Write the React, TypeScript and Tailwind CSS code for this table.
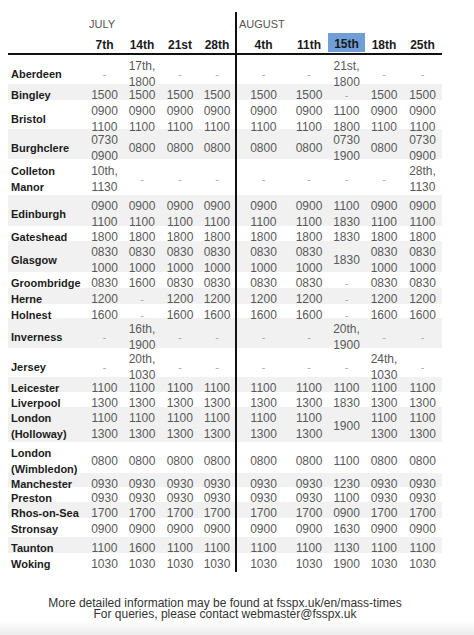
import React from "react";

type Row = { name: string[]; h: string; cells: string[][] };

const d = ["-"];
const one = (s: string) => [s];
const two = (a: string, b: string) => [a, b];

const rows: Row[] = [
  { name: ["Aberdeen"], h: "h-[29px]", cells: [d, two("17th,", "1800"), d, d, d, d, two("21st,", "1800"), d, d] },
  { name: ["Bingley"], h: "h-[16px]", cells: [one("1500"), one("1500"), one("1500"), one("1500"), one("1500"), one("1500"), d, one("1500"), one("1500")] },
  { name: ["Bristol"], h: "h-[29px]", cells: [two("0900", "1100"), two("0900", "1100"), two("0900", "1100"), two("0900", "1100"), two("0900", "1100"), two("0900", "1100"), two("1100", "1800"), two("0900", "1100"), two("0900", "1100")] },
  { name: ["Burghclere"], h: "h-[30px]", cells: [two("0730", "0900"), one("0800"), one("0800"), one("0800"), one("0800"), one("0800"), two("0730", "1900"), one("0800"), two("0730", "0900")] },
  { name: ["Colleton", "Manor"], h: "h-[36px]", cells: [two("10th,", "1130"), d, d, d, d, d, d, d, two("28th,", "1130")] },
  { name: ["Edinburgh"], h: "h-[31px]", cells: [two("0900", "1100"), two("0900", "1100"), two("0900", "1100"), two("0900", "1100"), two("0900", "1100"), two("0900", "1100"), two("1100", "1830"), two("0900", "1100"), two("0900", "1100")] },
  { name: ["Gateshead"], h: "h-[15px]", cells: [one("1800"), one("1800"), one("1800"), one("1800"), one("1800"), one("1800"), one("1830"), one("1800"), one("1800")] },
  { name: ["Glasgow"], h: "h-[31px]", cells: [two("0830", "1000"), two("0830", "1000"), two("0830", "1000"), two("0830", "1000"), two("0830", "1000"), two("0830", "1000"), one("1830"), two("0830", "1000"), two("0830", "1000")] },
  { name: ["Groombridge"], h: "h-[16px]", cells: [one("0830"), one("1600"), one("0830"), one("0830"), one("0830"), one("0830"), d, one("0830"), one("0830")] },
  { name: ["Herne"], h: "h-[16px]", cells: [one("1200"), d, one("1200"), one("1200"), one("1200"), one("1200"), d, one("1200"), one("1200")] },
  { name: ["Holnest"], h: "h-[14px]", cells: [one("1600"), d, one("1600"), one("1600"), one("1600"), one("1600"), d, one("1600"), one("1600")] },
  { name: ["Inverness"], h: "h-[30px]", cells: [d, two("16th,", "1900"), d, d, d, d, two("20th,", "1900"), d, d] },
  { name: ["Jersey"], h: "h-[29px]", cells: [d, two("20th,", "1030"), d, d, d, d, d, two("24th,", "1030"), d] },
  { name: ["Leicester"], h: "h-[15px]", cells: [one("1100"), one("1100"), one("1100"), one("1100"), one("1100"), one("1100"), one("1100"), one("1100"), one("1100")] },
  { name: ["Liverpool"], h: "h-[15px]", cells: [one("1300"), one("1300"), one("1300"), one("1300"), one("1300"), one("1300"), one("1830"), one("1300"), one("1300")] },
  { name: ["London", "(Holloway)"], h: "h-[35px]", cells: [two("1100", "1300"), two("1100", "1300"), two("1100", "1300"), two("1100", "1300"), two("1100", "1300"), two("1100", "1300"), one("1900"), two("1100", "1300"), two("1100", "1300")] },
  { name: ["London", "(Wimbledon)"], h: "h-[31px]", cells: [one("0800"), one("0800"), one("0800"), one("0800"), one("0800"), one("0800"), one("1100"), one("0800"), one("0800")] },
  { name: ["Manchester"], h: "h-[14px]", cells: [one("0930"), one("0930"), one("0930"), one("0930"), one("0930"), one("0930"), one("1230"), one("0930"), one("0930")] },
  { name: ["Preston"], h: "h-[15px]", cells: [one("0930"), one("0930"), one("0930"), one("0930"), one("0930"), one("0930"), one("1100"), one("0930"), one("0930")] },
  { name: ["Rhos-on-Sea"], h: "h-[16px]", cells: [one("1700"), one("1700"), one("1700"), one("1700"), one("1700"), one("1700"), one("0900"), one("1700"), one("1700")] },
  { name: ["Stronsay"], h: "h-[19px]", cells: [one("0900"), one("0900"), one("0900"), one("0900"), one("0900"), one("0900"), one("1630"), one("0900"), one("0900")] },
  { name: ["Taunton"], h: "h-[16px]", cells: [one("1100"), one("1600"), one("1100"), one("1100"), one("1100"), one("1100"), one("1130"), one("1100"), one("1100")] },
  { name: ["Woking"], h: "h-[15px]", cells: [one("1030"), one("1030"), one("1030"), one("1030"), one("1030"), one("1030"), one("1900"), one("1030"), one("1030")] },
];

const grid =
  "grid grid-cols-[78px_37px_38px_38px_36px_2px_53px_38px_37px_38px_39px]";

function Cell({ lines }: { lines: string[] }) {
  const dash = lines.length === 1 && lines[0] === "-";
  return (
    <div className="flex flex-col items-center justify-center pt-[3px]">
      {lines.map((l, i) => (
        <span
          key={i}
          className={
            dash
              ? "text-[11px] leading-[16px] text-[#a8a8a8]"
              : "text-[12px] leading-[16px] text-[#595959]"
          }
        >
          {l}
        </span>
      ))}
    </div>
  );
}

export default function App() {
  const july = ["7th", "14th", "21st", "28th"];
  const aug = ["4th", "11th", "15th", "18th", "25th"];
  return (
    <div
      className="flex h-[635px] w-[474px] flex-col bg-white"
      style={{ fontFamily: '"Liberation Sans", Arial, sans-serif' }}
    >
      <div className="ml-[8px] mt-[12px] w-[434px]">
        {/* month row */}
        <div className={`${grid} h-[21px]`}>
          <div />
          <div className="col-span-4 pl-[3px] pt-[5px] text-[11px] leading-[14px] text-[#555]">
            JULY
          </div>
          <div className="bg-[#111]" />
          <div className="col-span-5 pl-[2px] pt-[5px] text-[11px] leading-[14px] text-[#555]">
            AUGUST
          </div>
        </div>
        {/* date row */}
        <div className={`${grid} h-[20px]`}>
          <div />
          {july.map((t) => (
            <div key={t} className="flex items-end justify-center text-[12px] font-bold leading-[16px] text-[#1a1a1a]">
              {t}
            </div>
          ))}
          <div className="bg-[#111]" />
          {aug.map((t) => (
            <div
              key={t}
              className={`flex items-end justify-center text-[12px] font-bold leading-[16px] text-[#1a1a1a] ${
                t === "15th" ? "mb-[1px] bg-[#6f9fd6]" : ""
              }`}
            >
              {t}
            </div>
          ))}
        </div>
        <div className="h-[2px] bg-[#111]" />
        {rows.map((r, idx) => (
          <div
            key={r.name.join(" ")}
            className={`${grid} ${r.h} ${idx % 2 === 1 ? "bg-[#f1f1f1]" : "bg-white"}`}
          >
            <div className="flex flex-col justify-center pl-[3px] pt-[3px]">
              {r.name.map((n) => (
                <span key={n} className="whitespace-nowrap text-[11px] font-bold leading-[16px] text-[#1c1c1c]">
                  {n}
                </span>
              ))}
            </div>
            {r.cells.slice(0, 4).map((c, i) => (
              <Cell key={i} lines={c} />
            ))}
            <div className="bg-[#111]" />
            {r.cells.slice(4).map((c, i) => (
              <Cell key={i + 4} lines={c} />
            ))}
          </div>
        ))}
      </div>
      <div className="ml-[8px] mt-[30px] w-[434px] text-center text-[12px] leading-[11px] text-[#333]">
        <div>More detailed information may be found at fsspx.uk/en/mass-times</div>
        <div>For queries, please contact webmaster@fsspx.uk</div>
      </div>
      <div className="mt-auto h-[14px] bg-linear-to-b from-white to-[#ececec]" />
    </div>
  );
}
